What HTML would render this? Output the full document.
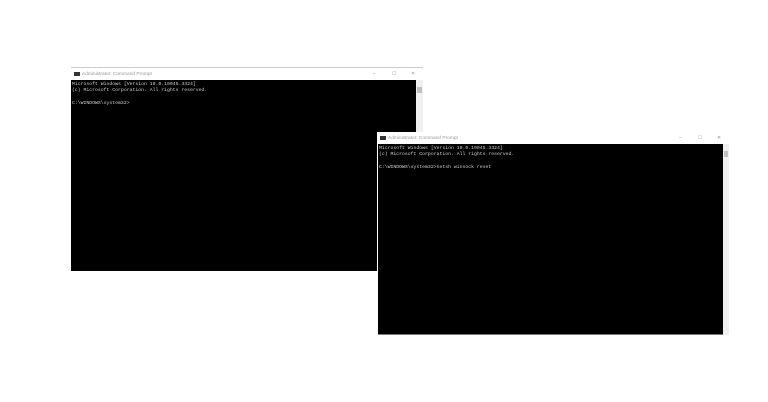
<!DOCTYPE html>
<html><head><style>
body{margin:0;width:768px;height:402px;background:#fff;position:relative;overflow:hidden;font-family:"Liberation Sans",sans-serif}
.w{position:absolute;background:#fff}
.tb{position:absolute;left:0;right:0;top:0;height:12px;font-size:4.8px;color:#999;}
.ic{position:absolute;left:3px;top:4px;width:6px;height:4px;background:#333}
.tt{position:absolute;left:11px;top:3.5px}
.ctl{position:absolute;top:3px;font-size:5px;color:#999}
.con{position:absolute;background:#000;color:#d0d0d0;font-family:"Liberation Mono",monospace;font-size:4.8px;line-height:6.4px;white-space:pre;padding:1.5px 0 0 1px;box-sizing:border-box}
.sb{position:absolute;background:#f0f0f0}
.th{position:absolute;left:1px;width:5px;background:#c0c0c0}
</style></head><body>
<div class="w" style="left:71px;top:67px;width:352px;height:204px;border-top:1px solid #ccc">
<div class="tb"><div class="ic"></div><div class="tt">Administrator: Command Prompt</div>
<div class="ctl" style="left:302px">–</div><div class="ctl" style="left:321px">☐</div><div class="ctl" style="left:340px">✕</div></div>
<div class="con" style="left:0;top:12px;width:345px;height:191px">Microsoft Windows [Version 10.0.19045.3324]
(c) Microsoft Corporation. All rights reserved.

C:\WINDOWS\system32></div>
<div class="sb" style="left:345px;top:12px;width:7px;height:191px"><div class="th" style="top:7px;height:6px"></div></div>
</div>
<div class="w" style="left:377px;top:132px;width:352px;height:204px">
<div class="tb"><div class="ic"></div><div class="tt">Administrator: Command Prompt</div>
<div class="ctl" style="left:302px">–</div><div class="ctl" style="left:321px">☐</div><div class="ctl" style="left:340px">✕</div></div>
<div class="con" style="left:1px;top:12px;width:345px;height:191px;border-bottom:1px solid #777">Microsoft Windows [Version 10.0.19045.3324]
(c) Microsoft Corporation. All rights reserved.

C:\WINDOWS\system32>netsh winsock reset</div>
<div class="sb" style="left:346px;top:12px;width:6px;height:191px"><div class="th" style="top:7px;height:6px;width:4px"></div></div>
</div>
</body></html>
